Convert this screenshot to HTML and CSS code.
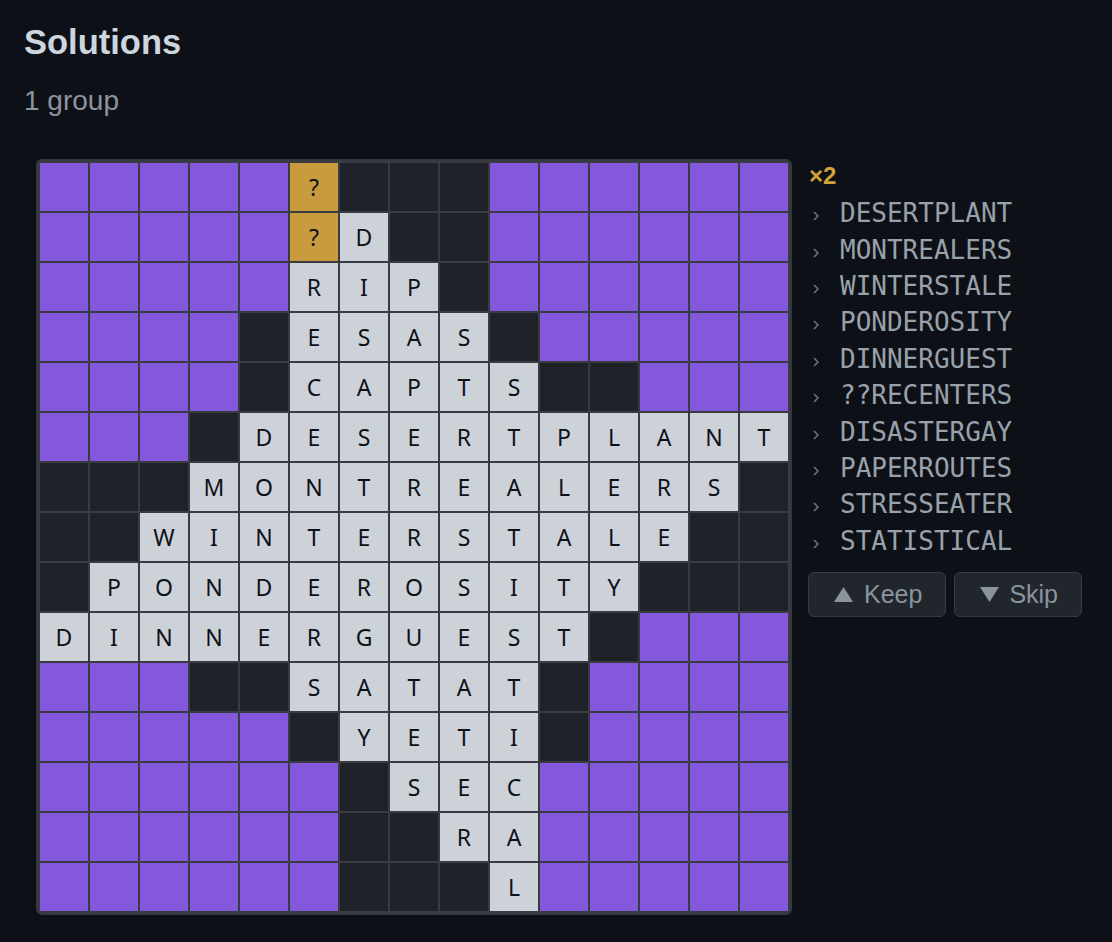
FILE: index.html
```html
<!DOCTYPE html>
<html>
<head>
<meta charset="utf-8">
<link rel="stylesheet" href="styles.css">
</head>
<body>
<h1 class="title">Solutions</h1>
<p class="sub">1 group</p>
<div class="row">
  <div class="board">
    <i class="p"></i><i class="p"></i><i class="p"></i><i class="p"></i><i class="p"></i><i class="g">?</i><i class="d"></i><i class="d"></i><i class="d"></i><i class="p"></i><i class="p"></i><i class="p"></i><i class="p"></i><i class="p"></i><i class="p"></i>
    <i class="p"></i><i class="p"></i><i class="p"></i><i class="p"></i><i class="p"></i><i class="g">?</i><i class="l">D</i><i class="d"></i><i class="d"></i><i class="p"></i><i class="p"></i><i class="p"></i><i class="p"></i><i class="p"></i><i class="p"></i>
    <i class="p"></i><i class="p"></i><i class="p"></i><i class="p"></i><i class="p"></i><i class="l">R</i><i class="l">I</i><i class="l">P</i><i class="d"></i><i class="p"></i><i class="p"></i><i class="p"></i><i class="p"></i><i class="p"></i><i class="p"></i>
    <i class="p"></i><i class="p"></i><i class="p"></i><i class="p"></i><i class="d"></i><i class="l">E</i><i class="l">S</i><i class="l">A</i><i class="l">S</i><i class="d"></i><i class="p"></i><i class="p"></i><i class="p"></i><i class="p"></i><i class="p"></i>
    <i class="p"></i><i class="p"></i><i class="p"></i><i class="p"></i><i class="d"></i><i class="l">C</i><i class="l">A</i><i class="l">P</i><i class="l">T</i><i class="l">S</i><i class="d"></i><i class="d"></i><i class="p"></i><i class="p"></i><i class="p"></i>
    <i class="p"></i><i class="p"></i><i class="p"></i><i class="d"></i><i class="l">D</i><i class="l">E</i><i class="l">S</i><i class="l">E</i><i class="l">R</i><i class="l">T</i><i class="l">P</i><i class="l">L</i><i class="l">A</i><i class="l">N</i><i class="l">T</i>
    <i class="d"></i><i class="d"></i><i class="d"></i><i class="l">M</i><i class="l">O</i><i class="l">N</i><i class="l">T</i><i class="l">R</i><i class="l">E</i><i class="l">A</i><i class="l">L</i><i class="l">E</i><i class="l">R</i><i class="l">S</i><i class="d"></i>
    <i class="d"></i><i class="d"></i><i class="l">W</i><i class="l">I</i><i class="l">N</i><i class="l">T</i><i class="l">E</i><i class="l">R</i><i class="l">S</i><i class="l">T</i><i class="l">A</i><i class="l">L</i><i class="l">E</i><i class="d"></i><i class="d"></i>
    <i class="d"></i><i class="l">P</i><i class="l">O</i><i class="l">N</i><i class="l">D</i><i class="l">E</i><i class="l">R</i><i class="l">O</i><i class="l">S</i><i class="l">I</i><i class="l">T</i><i class="l">Y</i><i class="d"></i><i class="d"></i><i class="d"></i>
    <i class="l">D</i><i class="l">I</i><i class="l">N</i><i class="l">N</i><i class="l">E</i><i class="l">R</i><i class="l">G</i><i class="l">U</i><i class="l">E</i><i class="l">S</i><i class="l">T</i><i class="d"></i><i class="p"></i><i class="p"></i><i class="p"></i>
    <i class="p"></i><i class="p"></i><i class="p"></i><i class="d"></i><i class="d"></i><i class="l">S</i><i class="l">A</i><i class="l">T</i><i class="l">A</i><i class="l">T</i><i class="d"></i><i class="p"></i><i class="p"></i><i class="p"></i><i class="p"></i>
    <i class="p"></i><i class="p"></i><i class="p"></i><i class="p"></i><i class="p"></i><i class="d"></i><i class="l">Y</i><i class="l">E</i><i class="l">T</i><i class="l">I</i><i class="d"></i><i class="p"></i><i class="p"></i><i class="p"></i><i class="p"></i>
    <i class="p"></i><i class="p"></i><i class="p"></i><i class="p"></i><i class="p"></i><i class="p"></i><i class="d"></i><i class="l">S</i><i class="l">E</i><i class="l">C</i><i class="p"></i><i class="p"></i><i class="p"></i><i class="p"></i><i class="p"></i>
    <i class="p"></i><i class="p"></i><i class="p"></i><i class="p"></i><i class="p"></i><i class="p"></i><i class="d"></i><i class="d"></i><i class="l">R</i><i class="l">A</i><i class="p"></i><i class="p"></i><i class="p"></i><i class="p"></i><i class="p"></i>
    <i class="p"></i><i class="p"></i><i class="p"></i><i class="p"></i><i class="p"></i><i class="p"></i><i class="d"></i><i class="d"></i><i class="d"></i><i class="l">L</i><i class="p"></i><i class="p"></i><i class="p"></i><i class="p"></i><i class="p"></i>
  </div>
  <div class="panel">
    <div class="mult">×2</div>
    <ul class="words">
      <li><svg class="chev" viewBox="0 0 6 10"><path d="M1 1 L5 5 L1 9"/></svg>DESERTPLANT</li>
      <li><svg class="chev" viewBox="0 0 6 10"><path d="M1 1 L5 5 L1 9"/></svg>MONTREALERS</li>
      <li><svg class="chev" viewBox="0 0 6 10"><path d="M1 1 L5 5 L1 9"/></svg>WINTERSTALE</li>
      <li><svg class="chev" viewBox="0 0 6 10"><path d="M1 1 L5 5 L1 9"/></svg>PONDEROSITY</li>
      <li><svg class="chev" viewBox="0 0 6 10"><path d="M1 1 L5 5 L1 9"/></svg>DINNERGUEST</li>
      <li><svg class="chev" viewBox="0 0 6 10"><path d="M1 1 L5 5 L1 9"/></svg>??RECENTERS</li>
      <li><svg class="chev" viewBox="0 0 6 10"><path d="M1 1 L5 5 L1 9"/></svg>DISASTERGAY</li>
      <li><svg class="chev" viewBox="0 0 6 10"><path d="M1 1 L5 5 L1 9"/></svg>PAPERROUTES</li>
      <li><svg class="chev" viewBox="0 0 6 10"><path d="M1 1 L5 5 L1 9"/></svg>STRESSEATER</li>
      <li><svg class="chev" viewBox="0 0 6 10"><path d="M1 1 L5 5 L1 9"/></svg>STATISTICAL</li>
    </ul>
    <div class="actions">
      <button class="btn keep"><svg class="tri" viewBox="0 0 19 15"><path d="M9.5 0 L19 15 L0 15 Z"/></svg>Keep</button>
      <button class="btn skip"><svg class="tri" viewBox="0 0 19 15"><path d="M0 0 L19 0 L9.5 15 Z"/></svg>Skip</button>
    </div>
  </div>
</div>
</body>
</html>
```
FILE: styles.css
```css
html, body {
  margin: 0;
  background: #0d1117;
}
body {
  padding: 22px 24px;
  font-family: "Liberation Sans", Arial, sans-serif;
}
.title {
  margin: 0;
  font-size: 34.5px;
  line-height: 40px;
  font-weight: 700;
  color: #cdd5df;
}
.sub {
  margin: 23px 0 0;
  font-size: 28px;
  line-height: 32px;
  color: #8b949e;
}
.row {
  display: flex;
  align-items: flex-start;
  gap: 16px;
  margin: 42px 0 0 12px;
}
.board {
  display: grid;
  grid-template-columns: repeat(15, 48px);
  grid-auto-rows: 48px;
  gap: 2px;
  padding: 2px;
  border: 2px solid #343940;
  border-radius: 6px;
  background: #393b41;
}
.board i {
  display: flex;
  align-items: center;
  justify-content: center;
  font-style: normal;
  font-family: "Noto Sans", sans-serif;
  font-size: 23px;
  color: #0d1117;
}
.board .p { background: #8358dc; }
.board .d { background: #1f2229; }
.board .l { background: #cdd2d9; }
.board .g { background: #c99b3f; }
.panel {
  display: flex;
  flex-direction: column;
  align-items: flex-start;
}
.mult {
  margin: 4px 0 0 1px;
  font-size: 24px;
  line-height: 26px;
  font-weight: 700;
  color: #d4a13a;
}
.words {
  list-style: none;
  margin: 6px 0 0;
  padding: 0;
}
.words li {
  display: flex;
  align-items: center;
  height: 36.4px;
  font-family: "DejaVu Sans Mono", monospace;
  font-size: 26px;
  color: #99a1aa;
}
.chev {
  width: 6px;
  height: 10px;
  margin: 6px 21px 0 5px;
  fill: none;
  stroke: #6e7681;
  stroke-width: 1.5;
}
.actions {
  display: flex;
  gap: 8px;
  margin-top: 13px;
}
.btn {
  display: flex;
  align-items: center;
  height: 45px;
  padding: 0 23px 0 25px;
  background: #21262d;
  border: 1.5px solid #363b43;
  border-radius: 6px;
  font-family: "Liberation Sans", Arial, sans-serif;
  font-size: 25px;
  color: #8b949e;
}
.tri {
  width: 19px;
  height: 15px;
  margin-right: 11px;
  fill: #8b949e;
}
.skip .tri { margin-right: 10px; }
```
